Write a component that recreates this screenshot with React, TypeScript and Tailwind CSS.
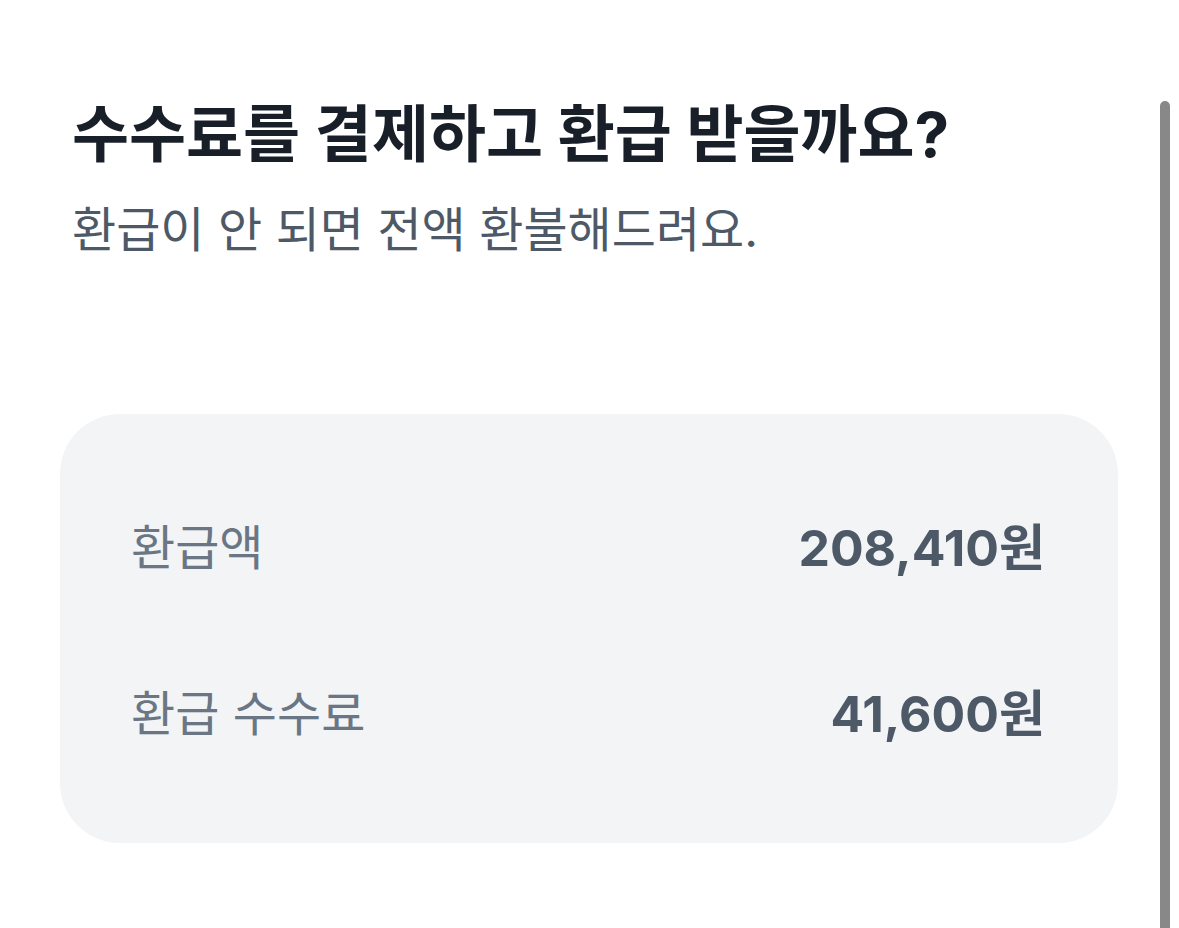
const ROWS = [
  { label: '환급액', value: '208,410원' },
  { label: '환급 수수료', value: '41,600원' },
]

export default function App() {
  return (
    <div className="relative min-h-[928px] bg-white font-['Inter','Noto_Sans_CJK_KR',sans-serif]">
      <main className="pl-[72px] pr-[61px] pt-[95px]">
        <h1 className="text-[62px] leading-[80px] font-bold text-[#191f28]">
          수수료를 결제하고 환급 받을까요?
        </h1>
        <p className="mt-[23px] text-[48px] leading-[64px] text-[#4e5968]">
          환급이 안 되면 전액 환불해드려요.
        </p>

        <section className="mt-[152px] -ml-[12px] flex flex-col gap-[110px] rounded-[60px] bg-[#f2f4f6] pl-[71px] pr-[73px] pt-[106px] pb-[101px]">
          {ROWS.map(r => (
            <div key={r.label} className="flex items-center justify-between">
              <span className="text-[48px] leading-[56px] text-[#6b7684]">{r.label}</span>
              <span className="text-[50px] leading-[56px] font-bold text-[#4e5968]">{r.value}</span>
            </div>
          ))}
        </section>
      </main>

      {/* scrollbar */}
      <div className="absolute right-[9px] top-[101px] bottom-0 w-[10px] rounded-t-full bg-[#888888]" />
    </div>
  )
}
